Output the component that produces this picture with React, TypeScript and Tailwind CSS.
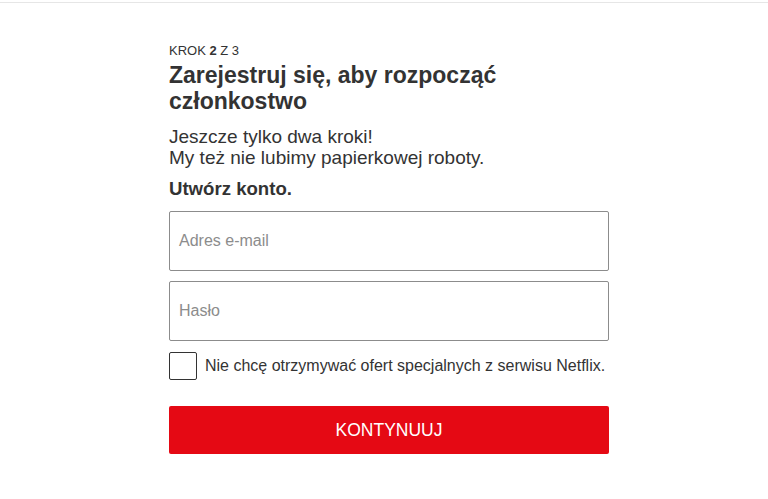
export default function App() {
  return (
    <div className="w-[768px] h-[499px] bg-white overflow-hidden" style={{ fontFamily: '"Liberation Sans", Arial, sans-serif' }}>
      <div className="h-[2px]" />
      <div className="h-px bg-[#e6e6e6]" />
      <div className="w-[440px] ml-[169px] pt-[40px] text-[#333333]">
        <div className="text-[13px] leading-[16px]">
          KROK <span className="font-bold">2</span> Z 3
        </div>
        <h1 className="text-[23px] leading-[26px] font-bold mt-[3px]">
          Zarejestruj się, aby rozpocząć
          <br />
          członkostwo
        </h1>
        <div className="text-[19px] leading-[21px] mt-[12px]">
          Jeszcze tylko dwa kroki!
          <br />
          My też nie lubimy papierkowej roboty.
        </div>
        <div className="text-[18.6px] leading-[21px] font-bold mt-[10px]">Utwórz konto.</div>
        <div className="mt-[12px] h-[60px] border border-[#8c8c8c] rounded-[2px] flex items-center px-[9px] text-[16px] text-[#8c8c8c]">
          Adres e-mail
        </div>
        <div className="mt-[10px] h-[60px] border border-[#8c8c8c] rounded-[2px] flex items-center px-[9px] text-[16px] text-[#8c8c8c]">
          Hasło
        </div>
        <div className="mt-[11px] flex items-center gap-[8px]">
          <div className="w-[28px] h-[28px] border border-[#333333] rounded-[2px] bg-white" />
          <span className="text-[16px] text-[#333333]">Nie chcę otrzymywać ofert specjalnych z serwisu Netflix.</span>
        </div>
        <button className="mt-[26px] w-full h-[48px] bg-[#e50914] rounded-[2px] text-white text-[17.5px] flex items-center justify-center">
          KONTYNUUJ
        </button>
      </div>
    </div>
  );
}
